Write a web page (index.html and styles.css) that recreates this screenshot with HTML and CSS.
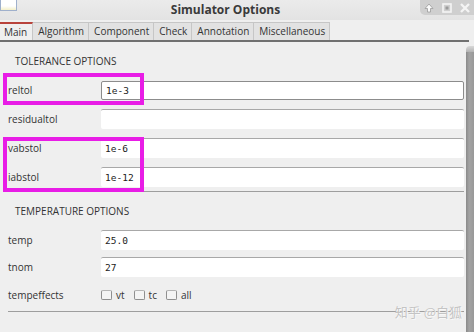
FILE: index.html
```html
<!DOCTYPE html>
<html>

<head>
  <meta charset="UTF-8">
  <title>Simulator Options</title>
  <link rel="stylesheet" href="styles.css">
</head>

<body>
  <div class="window">
    <!-- title bar -->
    <div class="titlebar">
      <div class="app-icon"></div>
      <div class="title">Simulator Options</div>
      <div class="win-buttons">
        <svg width="12" height="12" viewBox="0 0 12 12">
          <path d="M6 2 L10 6.5 L7.5 6.5 L7.5 10 L4.5 10 L4.5 6.5 L2 6.5 Z" fill="#fafafa" stroke="#9a9a9a" stroke-width="0.8"/>
        </svg>
        <svg width="12" height="12" viewBox="0 0 12 12">
          <rect x="2" y="2" width="8" height="8" fill="none" stroke="#f4f4f4" stroke-width="1.6"/>
          <rect x="4.5" y="4.5" width="3" height="3" fill="#9a9a9a"/>
        </svg>
        <svg width="12" height="12" viewBox="0 0 12 12">
          <path d="M2 2 L10 10 M10 2 L2 10" stroke="#f4f4f4" stroke-width="2.4"/>
        </svg>
      </div>
    </div>

    <div class="body">
      <div class="main">
        <!-- tabs -->
        <ul class="tabs">
          <li class="active">Main</li>
          <li>Algorithm</li>
          <li>Component</li>
          <li>Check</li>
          <li>Annotation</li>
          <li>Miscellaneous</li>
        </ul>

        <div class="content">
          <div class="section-title">TOLERANCE OPTIONS</div>
          <div class="rows">
            <div class="row"><span class="label">reltol</span><div class="field focused">1e-3</div></div>
            <div class="row"><span class="label">residualtol</span><div class="field"></div></div>
            <div class="row"><span class="label">vabstol</span><div class="field">1e-6</div></div>
            <div class="row"><span class="label">iabstol</span><div class="field">1e-12</div></div>
          </div>
          <div class="separator first"></div>

          <div class="section-title">TEMPERATURE OPTIONS</div>
          <div class="rows temp-rows">
            <div class="row"><span class="label">temp</span><div class="field">25.0</div></div>
            <div class="row"><span class="label">tnom</span><div class="field">27</div></div>
            <div class="row checks">
              <span class="label">tempeffects</span>
              <div class="check-list">
                <span class="check"><span class="box"></span>vt</span>
                <span class="check"><span class="box"></span>tc</span>
                <span class="check"><span class="box"></span>all</span>
              </div>
            </div>
          </div>
          <div class="separator"></div>

          <!-- highlight marks drawn over the form -->
          <div class="mark mark-one"></div>
          <div class="mark mark-two"></div>
          <div class="watermark">知乎 @白狐</div>
        </div>
      </div>

      <div class="scrollbar">
        <div class="scroll-arrow"></div>
        <div class="scroll-track"></div>
      </div>
    </div>
  </div>
</body>

</html>
```

FILE: styles.css
```css
body {
  margin: 0;
  font-family: "Open Sans", "Noto Sans", sans-serif;
  background-color: #efefef;
  color: #333;
}

.window {
  width: 474px;
  height: 332px;
  overflow: hidden;
  display: flex;
  flex-direction: column;
}

/* title bar */
.titlebar {
  height: 20px;
  display: flex;
  align-items: flex-start;
  background: linear-gradient(#ebebeb, #e3e3e3);
  position: relative;
}

.app-icon {
  width: 15px;
  height: 10px;
  border: 1px solid #9fb0cc;
  border-top: none;
  background: linear-gradient(#ffffff 60%, #f3efc8);
}

.title {
  flex: 1;
  text-align: center;
  font-weight: bold;
  font-size: 12px;
  line-height: 19px;
  color: #3a3a3a;
  padding-left: 14px;
}

.win-buttons {
  width: 54px;
  height: 15px;
  display: flex;
  justify-content: space-around;
  align-items: center;
  background-color: #cfcfcf;
  border-bottom-left-radius: 5px;
}

/* window body */
.body {
  flex: 1;
  display: flex;
}

.main {
  flex: 1;
  display: flex;
  flex-direction: column;
}

.tabs {
  list-style: none;
  margin: 0;
  padding: 2px 0 0 0;
  display: flex;
  height: 18px;
  border-bottom: 2px solid #707070;
  margin-right: -3px;
}

.tabs li {
  font-size: 10px;
  line-height: 17px;
  padding: 0 4px 0 5px;
  background-color: #e2e2e2;
  border: 1px solid #c6c6c6;
  border-bottom: none;
  border-left: none;
  color: #333;
}

.tabs li.active {
  background-color: #efefef;
  border-top: 2px solid #b8433c;
  line-height: 16px;
  padding: 0 5px 0 4px;
}

.content {
  position: relative;
  flex: 1;
  padding: 0 2px 0 8px;
}

.section-title {
  font-size: 10px;
  line-height: 14px;
  padding: 12px 0 12px 7px;
  color: #333;
}

.rows {
  display: flex;
  flex-direction: column;
  gap: 9px;
}

.temp-rows {
  gap: 7px;
}

.row {
  display: flex;
  align-items: center;
  height: 20px;
}

.label {
  width: 93px;
  font-size: 10px;
}

.field {
  flex: 1;
  height: 19px;
  background-color: #fff;
  border-top: 1px solid #a8a8a8;
  border-radius: 2px;
  font-family: "DejaVu Sans Mono", monospace;
  font-size: 9.5px;
  line-height: 19px;
  padding-left: 4px;
  color: #222;
}

.field.focused {
  height: 17px;
  border: 1px solid #8c8c8c;
  line-height: 17px;
}

.checks {
  height: 22px;
}

.check-list {
  display: flex;
  gap: 9px;
}

.check {
  display: flex;
  align-items: center;
  font-size: 10px;
  gap: 4px;
}

.box {
  width: 9px;
  height: 8px;
  border: 1px solid #8f8f8f;
  border-top-color: #b5b5b5;
  border-radius: 2px;
  background-color: #f4f4f4;
}

.separator {
  height: 1px;
  background-color: #9e9e9e;
  margin-top: 5px;
  margin-right: 0;
}

.separator.first {
  margin-top: 4px;
}

/* magenta highlight boxes */
.mark {
  position: absolute;
  left: 3px;
  width: 133px;
  border: 4px solid #e81de6;
}

.mark-one {
  top: 31px;
  height: 24px;
}

.mark-two {
  top: 95px;
  height: 47px;
}

.watermark {
  position: absolute;
  right: 4px;
  top: 260px;
  font-family: "Noto Sans CJK SC", sans-serif;
  font-size: 13px;
  color: #c4c4c4;
  text-shadow: 0 0 1px #ffffff, 1px 1px 0 #f8f8f8;
}

/* scrollbar */
.scrollbar {
  width: 8px;
  display: flex;
  flex-direction: column;
  padding-top: 26px;
}

.scroll-arrow {
  height: 6px;
  background: linear-gradient(#d8d8d8, #b3b3b3);
  border-top-left-radius: 4px;
}

.scroll-track {
  flex: 1;
  background: linear-gradient(90deg, #8a8a8a, #a3a3a3 40%, #989898);
}
```
